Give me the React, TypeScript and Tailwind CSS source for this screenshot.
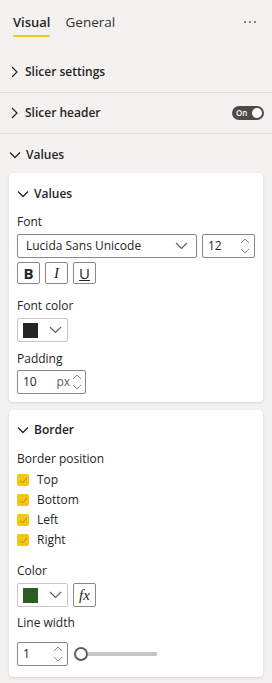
import React from "react";

const F = { fontFamily: '"Segoe UI","Open Sans","Noto Sans",sans-serif' };

function ChevronRight() {
  return (
    <svg width="8" height="12" viewBox="0 0 8 12" className="shrink-0">
      <path d="M2 1 L7 6 L2 11" fill="none" stroke="#252423" strokeWidth="1.2" />
    </svg>
  );
}
function ChevronDown({ w = 12 }: { w?: number }) {
  return (
    <svg width={w} height="8" viewBox="0 0 12 8" className="shrink-0">
      <path d="M1 1.5 L6 6.5 L11 1.5" fill="none" stroke="#252423" strokeWidth="1.3" />
    </svg>
  );
}
function SmallChevron() {
  return (
    <svg width="13" height="8" viewBox="0 0 13 8">
      <path d="M1 1 L6.5 6.5 L12 1" fill="none" stroke="#605e5c" strokeWidth="1.1" />
    </svg>
  );
}
function Spinner() {
  return (
    <svg width="10" height="18" viewBox="0 0 10 18">
      <path d="M1 6 L5 2 L9 6" fill="none" stroke="#8a8886" strokeWidth="1" />
      <path d="M1 12 L5 16 L9 12" fill="none" stroke="#8a8886" strokeWidth="1" />
    </svg>
  );
}
function Check({ label }: { label: string }) {
  return (
    <div className="h-[20px] flex items-center">
      <div className="w-[12px] h-[12px] rounded-[2px] bg-[#f2c811] flex items-center justify-center">
        <svg width="9" height="7" viewBox="0 0 9 7">
          <path d="M1 3.5 L3.5 6 L8 1" fill="none" stroke="#a88a10" strokeWidth="1" />
        </svg>
      </div>
      <span className="ml-[8px] text-[12px] leading-[16px]">{label}</span>
    </div>
  );
}
function Label({ children, cls = "" }: { children: React.ReactNode; cls?: string }) {
  return <div className={"text-[12px] leading-[16px] " + cls}>{children}</div>;
}

export default function App() {
  return (
    <div style={F} className="w-[272px] h-[683px] bg-[#f3f2f1] text-[#252423] overflow-hidden">
      {/* Tabs */}
      <div className="h-[52px] pl-[13px] pr-[16px] pt-[12px] flex justify-between">
        <div className="flex gap-[15px]">
          <div className="flex flex-col">
            <span className="text-[13px] leading-[20px] font-semibold">Visual</span>
            <div className="mt-[3px] h-[2px] bg-[#f2c811] rounded-full" />
          </div>
          <span className="text-[13.5px] leading-[20px] text-[#323130]">General</span>
        </div>
        <div className="h-[20px] flex items-center gap-[3px]">
          <span className="w-[2px] h-[2px] bg-[#605e5c] rounded-full" />
          <span className="w-[2px] h-[2px] bg-[#605e5c] rounded-full" />
          <span className="w-[2px] h-[2px] bg-[#605e5c] rounded-full" />
        </div>
      </div>
      {/* Slicer settings */}
      <div className="h-[41px] border-b border-[#e1dfdd] flex items-center pl-[10px]">
        <ChevronRight />
        <span className="ml-[7px] text-[12px] font-semibold">Slicer settings</span>
      </div>
      <div className="h-[41px] border-b border-[#e1dfdd] flex items-center pl-[10px] pr-[8px]">
        <ChevronRight />
        <span className="ml-[7px] text-[12px] font-semibold">Slicer header</span>
        <div className="ml-auto w-[32px] h-[14px] rounded-full bg-[#4d4b49] flex items-center pl-[4px] pr-[2px]">
          <span className="text-[8px] leading-[10px] text-white font-semibold">On</span>
          <span className="ml-auto w-[10px] h-[10px] rounded-full bg-white" />
        </div>
      </div>
      <div className="h-[39px] pt-[2px] flex items-center pl-[9px]">
        <ChevronDown />
        <span className="ml-[5px] text-[12px] font-semibold">Values</span>
      </div>

      {/* Card 1 */}
      <div className="mx-[9px] bg-white rounded-[4px] shadow-[0_1px_3px_rgba(0,0,0,0.13)] px-[8px] pb-[8px]">
        <div className="h-[41px] flex items-center">
          <ChevronDown />
          <span className="ml-[5px] text-[12px] font-semibold">Values</span>
        </div>
        <Label>Font</Label>
        <div className="mt-[4px] flex gap-[5px]">
          <div className="w-[180px] h-[24px] border border-[#8a8886] rounded-[2px] flex items-center pl-[8px] pr-[8px]">
            <span className="text-[12px]">Lucida Sans Unicode</span>
            <span className="ml-auto"><SmallChevron /></span>
          </div>
          <div className="w-[53px] h-[24px] border border-[#8a8886] rounded-[2px] flex items-center pl-[5px] pr-[4px]">
            <span className="text-[12px]">12</span>
            <span className="ml-auto"><Spinner /></span>
          </div>
        </div>
        <div className="mt-[4px] flex gap-[5px]">
          <div className="w-[23px] h-[22px] border border-[#8a8886] rounded-[2px] flex items-center justify-center text-[15px] font-bold">B</div>
          <div className="w-[23px] h-[22px] border border-[#8a8886] rounded-[2px] flex items-center justify-center text-[15px] italic" style={{ fontFamily: '"Liberation Serif",serif' }}>I</div>
          <div className="w-[23px] h-[22px] border border-[#8a8886] rounded-[2px] flex items-center justify-center text-[15px] underline">U</div>
        </div>
        <Label cls="mt-[14px]">Font color</Label>
        <div className="mt-[4px] w-[51px] h-[24px] border border-[#c8c6c4] rounded-[2px] flex items-center pl-[5px] pr-[5px]">
          <div className="w-[15px] h-[15px] bg-[#252423]" />
          <span className="ml-auto"><SmallChevron /></span>
        </div>
        <Label cls="mt-[9px]">Padding</Label>
        <div className="mt-[3px] w-[69px] h-[24px] border border-[#8a8886] rounded-[2px] flex items-center pl-[5px] pr-[3px]">
          <span className="text-[12px]">10</span>
          <span className="ml-auto text-[12px] text-[#605e5c]">px</span>
          <span className="ml-[2px]"><Spinner /></span>
        </div>
      </div>

      {/* Card 2 */}
      <div className="mt-[8px] mx-[9px] bg-white rounded-[4px] shadow-[0_1px_3px_rgba(0,0,0,0.13)] px-[8px] pb-[11px]">
        <div className="h-[40px] flex items-center">
          <ChevronDown />
          <span className="ml-[5px] text-[12px] font-semibold">Border</span>
        </div>
        <Label cls="mt-[1px]">Border position</Label>
        <div className="mt-[3px]">
          <Check label="Top" />
          <Check label="Bottom" />
          <Check label="Left" />
          <Check label="Right" />
        </div>
        <Label cls="mt-[13px]">Color</Label>
        <div className="mt-[4px] flex gap-[5px]">
          <div className="w-[51px] h-[24px] border border-[#c8c6c4] rounded-[2px] flex items-center pl-[5px] pr-[5px]">
            <div className="w-[15px] h-[15px] bg-[#2d5a27]" />
            <span className="ml-auto"><SmallChevron /></span>
          </div>
          <div className="w-[23px] h-[24px] border border-[#8a8886] rounded-[2px] flex items-center justify-center text-[15px] italic" style={{ fontFamily: '"Liberation Serif",serif' }}>fx</div>
        </div>
        <Label cls="mt-[8px]">Line width</Label>
        <div className="mt-[11px] flex items-center">
          <div className="w-[51px] h-[24px] border border-[#8a8886] rounded-[2px] flex items-center pl-[5px] pr-[4px]">
            <span className="text-[12px]">1</span>
            <span className="ml-auto"><Spinner /></span>
          </div>
          <div className="ml-[6px] w-[14px] h-[14px] rounded-full border-2 border-[#605e5c] bg-white shrink-0" />
          <div className="w-[69px] h-[4px] bg-[#c8c6c4]" />
        </div>
      </div>
    </div>
  );
}
